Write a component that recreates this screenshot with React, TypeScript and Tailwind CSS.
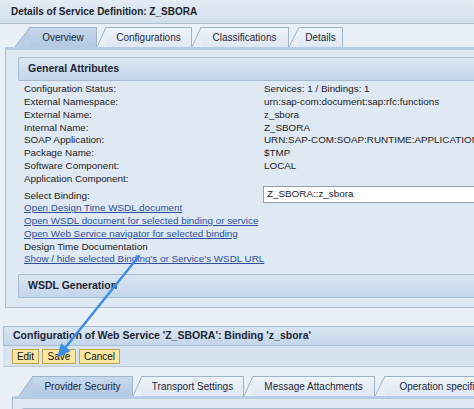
import React from "react";

type TabProps = {
  label: string;
  active?: boolean;
  slant: number;
  className: string;
};

function Tab({ label, active, slant, className }: TabProps) {
  const fill = active ? "#bacee5" : "#e7eef6";
  return (
    <div className={`flex h-[20px] shrink-0 ${className}`}>
      <svg width={slant} height={20} className="shrink-0 block">
        <polygon points={`0,20 ${slant},0 ${slant},20`} fill={fill} />
        <line x1="0" y1="20" x2={slant} y2="0" stroke="#9fb3c9" strokeWidth="1" />
      </svg>
      <div
        className={`flex-1 flex items-center justify-center border-t border-r border-[#9fb3c9] text-[10px] text-[#1c2838] whitespace-nowrap overflow-hidden ${
          active ? "bg-gradient-to-b from-[#c6d8ec] to-[#b3c9e2]" : "bg-gradient-to-b from-[#eef3f9] to-[#dfe8f3]"
        }`}
      >
        {label}
      </div>
    </div>
  );
}

const attrs: [string, string][] = [
  ["Configuration Status:", "Services: 1 / Bindings: 1"],
  ["External Namespace:", "urn:sap-com:document:sap:rfc:functions"],
  ["External Name:", "z_sbora"],
  ["Internal Name:", "Z_SBORA"],
  ["SOAP Application:", "URN:SAP-COM:SOAP:RUNTIME:APPLICATION:RFC"],
  ["Package Name:", "$TMP"],
  ["Software Component:", "LOCAL"],
  ["Application Component:", ""],
];

const links = [
  "Open Design Time WSDL document",
  "Open WSDL document for selected binding or service",
  "Open Web Service navigator for selected binding",
];

function SectionHeader({ title, className }: { title: string; className?: string }) {
  return (
    <div
      className={`h-[24px] flex items-center pl-[9px] border border-r-0 border-[#a7bbd1] rounded-l-[2px] bg-gradient-to-b from-[#dae6f2] to-[#c3d6ea] font-bold text-[10.5px] text-[#1c2533] whitespace-nowrap ${className ?? ""}`}
    >
      {title}
    </div>
  );
}

export default function App() {
  return (
    <div className="relative w-[474px] h-[409px] overflow-hidden bg-[#eaf0f7] font-['Liberation_Sans',Arial,sans-serif] text-[9.85px] text-[#222]">
      {/* Page header */}
      <div className="h-[24px] flex items-center pl-[11px] border-b border-[#aebfd2] bg-gradient-to-b from-[#e4ecf5] to-[#d0deec] font-bold text-[10px] text-[#1a1f28]">
        Details of Service Definition: Z_SBORA
      </div>

      {/* Tabs */}
      <div className="mt-[3px] flex pl-[15px]">
        <Tab label="Overview" active slant={15} className="w-[82px]" />
        <Tab label="Configurations" slant={9} className="w-[95px]" />
        <Tab label="Classifications" slant={9} className="w-[97px]" />
        <Tab label="Details" slant={10} className="w-[54px]" />
      </div>

      {/* Overview panel */}
      <div className="ml-[5px] border-l border-b border-[#a9bccf] border-t-[3px] border-t-[#b8cce3] bg-[#dfe9f4] pl-[12px] pt-[7px] pb-[9px]">
        <SectionHeader title="General Attributes" />
        <div className="pl-[6px] pt-[2px]">
          {attrs.map(([k, v]) => (
            <div key={k} className="flex h-[12.85px] items-center whitespace-nowrap">
              <span className="w-[240px] shrink-0">{k}</span>
              <span>{v}</span>
            </div>
          ))}
          <div className="flex h-[16px] items-start whitespace-nowrap">
            <span className="w-[239px] shrink-0 pt-[3px]">Select Binding:</span>
            <div className="h-[17px] flex-1 flex items-center pl-[3px] bg-white border border-[#8d9eb1] border-r-0">
              Z_SBORA::z_sbora
            </div>
          </div>
          <div className="pt-[0.5px]">
            {links.map((l) => (
              <div key={l} className="h-[12.8px] flex items-center whitespace-nowrap">
                <span className="text-[#2c4f9e] underline decoration-[#2c4f9e]">{l}</span>
              </div>
            ))}
            <div className="h-[12.8px] flex items-center">Design Time Documentation</div>
            <div className="h-[12.8px] flex items-center whitespace-nowrap">
              <span className="text-[#2c4f9e] underline">Show / hide selected Binding's or Service's WSDL URL</span>
            </div>
          </div>
        </div>
        <SectionHeader title="WSDL Generation" className="mt-[7.5px] h-[23px]" />
      </div>

      {/* Configuration of web service */}
      <div className="mt-[18px] ml-[3px] h-[20px] flex items-center pl-[9px] border border-r-0 border-[#a7bbd1] bg-gradient-to-b from-[#dae6f2] to-[#c4d6ea] font-bold text-[10.5px] text-[#1c2533] whitespace-nowrap">
        Configuration of Web Service 'Z_SBORA': Binding 'z_sbora'
      </div>
      <div className="ml-[3px] h-[21px] flex items-center gap-[2px] pl-[9px] pt-[2px] bg-[#d7e3f0] border-b border-[#b9c9da]">
        <button className="h-[15px] w-[27px] flex items-center justify-center bg-[#fbe8a0] border border-[#c2a552] text-[10px] text-[#111]">
          Edit
        </button>
        <button className="h-[15px] w-[34px] ml-[1px] flex items-center justify-center bg-[#fbe8a0] border border-[#c2a552] text-[10px] text-[#111]">
          Save
        </button>
        <button className="h-[15px] w-[41px] ml-[1px] flex items-center justify-center bg-[#fbe8a0] border border-[#c2a552] text-[10px] text-[#111]">
          Cancel
        </button>
      </div>

      {/* Tabs 2 */}
      <div className="mt-[9px] flex pl-[19px]">
        <Tab label="Provider Security" active slant={14} className="w-[114px]" />
        <Tab label="Transport Settings" slant={9} className="w-[111px]" />
        <Tab label="Message Attachments" slant={9} className="w-[131px]" />
        <Tab label="Operation specific" slant={10} className="w-[120px]" />
      </div>
      <div className="ml-[12px] h-[40px] border-l border-[#a9bccf] border-t-[3px] border-t-[#b8cce3] bg-[#dfe9f4] pl-[9px] pt-[9px]">
        <div className="h-[30px] border-l border-t border-[#a7bbd1] rounded-tl-[2px] bg-gradient-to-b from-[#dae6f2] to-[#c3d6ea]" />
      </div>

      {/* Annotation arrow */}
      <svg className="absolute inset-0 pointer-events-none" width="474" height="409" viewBox="0 0 474 409">
        <line x1="139" y1="256" x2="65.8" y2="347.1" stroke="#3b8de6" strokeWidth="2.4" strokeLinecap="round" />
        <polygon points="57,358 70.5,350.9 61.1,343.3" fill="#3b8de6" />
      </svg>
    </div>
  );
}
